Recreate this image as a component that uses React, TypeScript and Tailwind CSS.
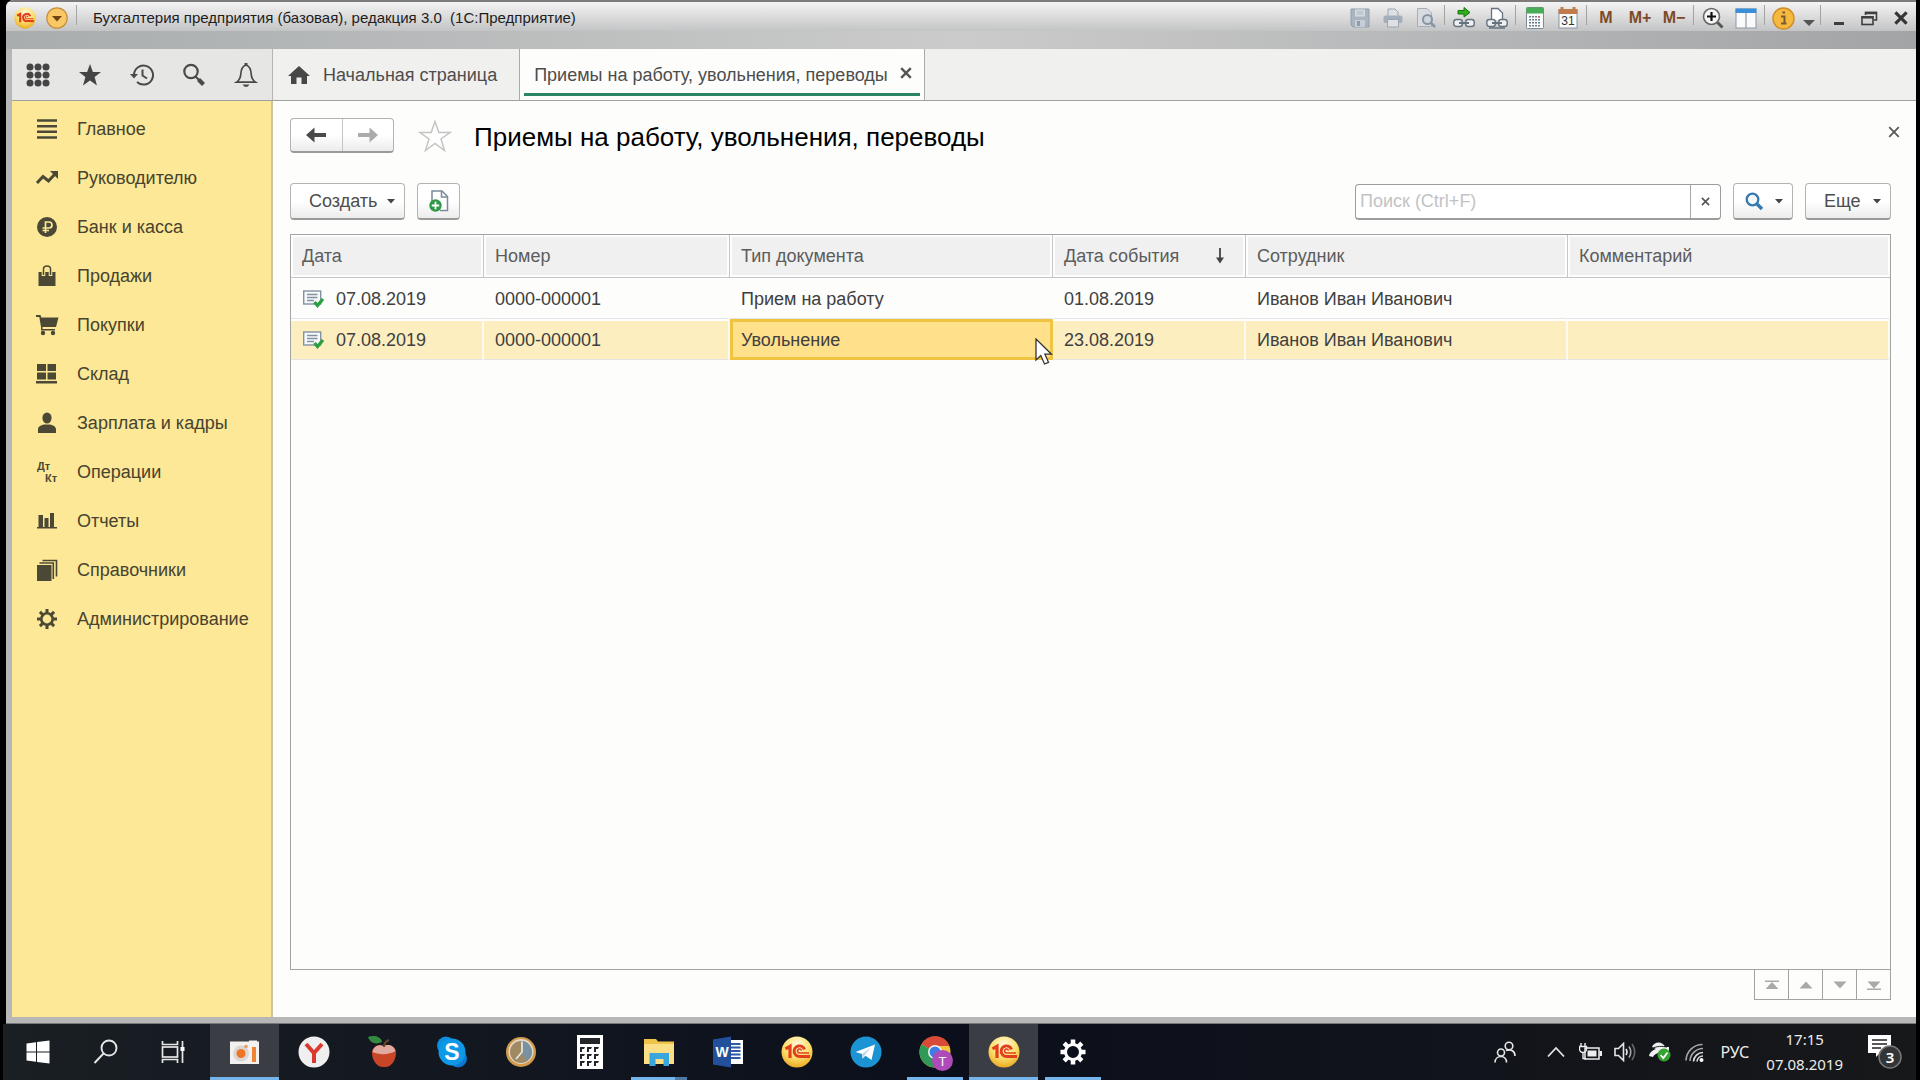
import type { ReactNode } from "react";

const FONT = "font-['Liberation_Sans',Arial,sans-serif]";

function OneCLogo({ size }: { size: number }) {
  return (
    <svg width={size} height={size} viewBox="0 0 32 32" aria-hidden="true">
      <defs>
        <radialGradient id="onec" cx="50%" cy="28%" r="75%">
          <stop offset="0" stopColor="#fffbe2" />
          <stop offset="0.55" stopColor="#fcdf6c" />
          <stop offset="1" stopColor="#e9a51f" />
        </radialGradient>
      </defs>
      <circle cx="16" cy="16" r="15.5" fill="url(#onec)" />
      <path d="M4.500 12.800 L9 10.200 V22" fill="none" stroke="#e2401c" strokeWidth="3.200" />
      <path d="M23.500 13.500 A5.300 5.300 0 1 0 18.500 20.500 H29" fill="none" stroke="#e2401c" strokeWidth="3" />
      <path d="M20.500 14.600 A2 2 0 1 0 18.600 17 H28" fill="none" stroke="#e2401c" strokeWidth="1.500" />
    </svg>
  );
}

function Caret({ className = "" }: { className?: string }) {
  return (
    <svg className={className} width="8" height="5" viewBox="0 0 8 5" aria-hidden="true">
      <path d="M0 0 H8 L4 4.5 Z" fill="#444" />
    </svg>
  );
}

function Cross({ size, width = 2, color = "#555" }: { size: number; width?: number; color?: string }) {
  return (
    <svg width={size} height={size} viewBox="0 0 10 10" aria-hidden="true">
      <path d="M1 1 L9 9 M9 1 L1 9" stroke={color} strokeWidth={width} />
    </svg>
  );
}

/* ---------- title bar ---------- */

function TitleButton({ label, className = "w-[33px]", children }: { label: string; className?: string; children: ReactNode }) {
  return (
    <button type="button" aria-label={label} className={`flex h-8 shrink-0 items-center justify-center ${className}`}>
      {children}
    </button>
  );
}

function TitleSep() {
  return <span className="mx-0.5 h-5 w-px shrink-0 self-start bg-[#a2a2a2]" />;
}

const chain = (
  <g fill="none" stroke="#66727e" strokeWidth="1.4">
    <rect x="0.8" y="12.500" width="8.500" height="7" rx="2.500" fill="#eef1f4" />
    <rect x="12.700" y="12.500" width="8.500" height="7" rx="2.500" fill="#eef1f4" />
    <path d="M6 16 H16" strokeWidth="2" />
  </g>
);

function TitleBar() {
  return (
    <header className="flex h-[49px] flex-col border-t-2 border-[#7d7b7b] bg-[#b3b5b6]">
      <div className="flex h-[29px] items-center bg-gradient-to-b from-[#f4f4f4] via-[#dcdcdc] to-[#c3c4c5] pt-[3px]">
        <TitleButton label="Главное меню" className="ml-[2px] w-[34px]">
          <OneCLogo size={22} />
        </TitleButton>
        <TitleButton label="Сервис" className="w-[30px]">
          <svg width="22" height="22" viewBox="0 0 22 22">
            <circle cx="11" cy="11" r="10.2" fill="#f9c766" stroke="#c98e3c" strokeWidth="1.2" />
            <path d="M6 9 H16 L11 14.5 Z" fill="#6f4414" />
          </svg>
        </TitleButton>
        <span className="mr-4 ml-1 h-5 w-px self-start bg-[#a5a5a5]" />
        <h1 className="flex-1 truncate text-[15px] whitespace-pre text-[#1d1d1d]">
          Бухгалтерия предприятия (базовая), редакция 3.0  (1С:Предприятие)
        </h1>
        <TitleButton label="Сохранить">
          <svg width="20" height="20" viewBox="0 0 20 20">
            <path d="M1 1 H19 V19 H3 L1 17 Z" fill="#a9b4c1" stroke="#929eac" />
            <rect x="5" y="1.5" width="10" height="7" fill="#d5dae0" />
            <path d="M6.500 4 H13.500 M6.500 6 H13.500" stroke="#a9b4c1" />
            <rect x="5" y="12" width="10" height="7" fill="#c6cdd6" />
            <rect x="7" y="13" width="3" height="5" fill="#8e9baa" />
          </svg>
        </TitleButton>
        <TitleButton label="Печать">
          <svg width="20" height="20" viewBox="0 0 20 20">
            <path d="M5 8 V1 H12 L15 4 V8" fill="#dde1e5" stroke="#9aa5b1" />
            <rect x="0.500" y="7.500" width="19" height="7.500" rx="2" fill="#a4afbb" />
            <rect x="4.500" y="11.500" width="11" height="7.500" fill="#dde1e5" stroke="#9aa5b1" />
          </svg>
        </TitleButton>
        <TitleButton label="Предварительный просмотр">
          <svg width="20" height="20" viewBox="0 0 20 20">
            <path d="M1.500 0.500 H11 L15.500 5 V18.500 H1.500 Z" fill="#d8dbdf" stroke="#a4aeb9" />
            <circle cx="11.500" cy="11.500" r="4.500" fill="#cdd5dd" stroke="#8795a3" strokeWidth="2" />
            <path d="M15 15 L19 19" stroke="#8795a3" strokeWidth="2.500" />
          </svg>
        </TitleButton>
        <TitleSep />
        <TitleButton label="Перейти по ссылке">
          <svg width="22" height="22" viewBox="0 0 22 22">
            <path d="M5 3.500 H11 V0.500 L17 5.500 L11 10 V7 H5 Z" fill="#2fae18" stroke="#15790b" />
            {chain}
          </svg>
        </TitleButton>
        <TitleButton label="Получить ссылку">
          <svg width="22" height="22" viewBox="0 0 22 22">
            <path d="M5.500 13 V1.500 H12 L16.500 6 V13" fill="#fff" stroke="#66727e" strokeWidth="1.300" />
            {chain}
            <path d="M3 21 H19" stroke="#66727e" strokeWidth="1.500" />
          </svg>
        </TitleButton>
        <TitleSep />
        <TitleButton label="Калькулятор">
          <svg width="18" height="22" viewBox="0 0 18 22">
            <rect x="0.500" y="0.500" width="17" height="21" rx="1" fill="#fafafa" stroke="#7b8b92" />
            <rect x="0.500" y="0.500" width="17" height="6" fill="#46ad54" />
            <g fill="#6a7c8d">
              {[9, 12, 15, 18].map((y) => [3, 6, 9, 12].map((x) => <rect key={`${x}-${y}`} x={x} y={y} width="2" height="1.500" />))}
            </g>
            <rect x="12" y="9" width="2" height="1.500" fill="#d55" />
          </svg>
        </TitleButton>
        <TitleButton label="Календарь">
          <svg width="20" height="22" viewBox="0 0 20 22">
            <rect x="1" y="3" width="18" height="18" fill="#fbfbfb" stroke="#8696a3" />
            <path d="M0.500 2 H19.500 V7 H0.500 Z" fill="#c07c4c" />
            <path d="M4 0 V4 M16 0 V4" stroke="#c07c4c" strokeWidth="3" />
            <text x="10" y="18" fontSize="12" textAnchor="middle" fill="#333">31</text>
          </svg>
        </TitleButton>
        <TitleSep />
        {["M", "M+", "M−"].map((label) => (
          <button key={label} type="button" className="w-[34px] shrink-0 text-base font-bold text-[#7d4a26]">
            {label}
          </button>
        ))}
        <TitleSep />
        <TitleButton label="Масштаб">
          <svg width="22" height="22" viewBox="0 0 22 22">
            <circle cx="9.500" cy="9.500" r="8" fill="#f5f5f5" stroke="#686868" strokeWidth="1.600" />
            <path d="M9.500 5 V14 M5 9.500 H14" stroke="#111" strokeWidth="2.200" />
            <path d="M15.500 15.500 L20.500 20.500" stroke="#555" strokeWidth="3" />
          </svg>
        </TitleButton>
        <TitleButton label="Разделить окно">
          <svg width="22" height="21" viewBox="0 0 22 21">
            <rect x="1" y="1" width="20" height="19" fill="#fafafa" stroke="#8b98a5" />
            <rect x="0.500" y="0.500" width="21" height="4.500" fill="#3b8fd8" />
            <path d="M11 5 V20" stroke="#7d8791" />
          </svg>
        </TitleButton>
        <TitleSep />
        <TitleButton label="О программе">
          <svg width="23" height="23" viewBox="0 0 23 23">
            <circle cx="11.500" cy="11.500" r="10.500" fill="#f6b940" stroke="#d08c25" strokeWidth="1.400" />
            <path d="M10.500 5.500 H13 M9 9.500 H12.500 V16 M9 16.500 H14.500" fill="none" stroke="#7a5a2c" strokeWidth="2" />
          </svg>
        </TitleButton>
        <TitleButton label="Настройки" className="w-[18px] pt-2.5">
          <svg width="12" height="6" viewBox="0 0 12 6">
            <path d="M0 0 H12 L6 6 Z" fill="#555" />
          </svg>
        </TitleButton>
        <TitleSep />
        <TitleButton label="Свернуть" className="w-[31px] pt-2.5">
          <span className="h-[3px] w-2.5 bg-[#3e3e3e]" />
        </TitleButton>
        <TitleButton label="Восстановить" className="w-[31px]">
          <svg width="17" height="15" viewBox="0 0 17 15" fill="none" stroke="#3e3e3e">
            <path d="M4.500 4 V1.500 H15.500 V9 H13" strokeWidth="1.600" />
            <path d="M4 2 H16" strokeWidth="2.500" />
            <rect x="1" y="6" width="11" height="7.500" strokeWidth="1.600" />
            <path d="M0.500 6.300 H12.500" strokeWidth="2.500" />
          </svg>
        </TitleButton>
        <TitleButton label="Закрыть" className="w-[31px]">
          <Cross size={14} width={2.2} color="#333" />
        </TitleButton>
      </div>
      <div className="flex-1 bg-gradient-to-r from-[#a9adae] via-[#cbcbcb] to-[#a2a4a6]" />
    </header>
  );
}

/* ---------- toolbar and tabs ---------- */

const toolIcons: { label: string; icon: ReactNode }[] = [
  {
    label: "Меню функций",
    icon: (
      <g fill="#454545">
        {[4, 12, 20].map((y) => [4, 12, 20].map((x) => <circle key={`${x}-${y}`} cx={x} cy={y} r="3.500" />))}
      </g>
    ),
  },
  {
    label: "Избранное",
    icon: <path fill="#454545" d="M12 1 L14.900 9 H23 L16.600 14 L19 22.500 L12 17.400 L5 22.500 L7.400 14 L1 9 H9.100 Z" />,
  },
  {
    label: "История",
    icon: (
      <g fill="none" stroke="#4a4a4a" strokeWidth="2">
        <path d="M4 12 A9.500 9.500 0 1 1 7 19" />
        <path d="M12.500 6.500 V12.500 L17 15.500" />
        <path d="M0 11 H8 L4 15.500 Z" fill="#4a4a4a" stroke="none" />
      </g>
    ),
  },
  {
    label: "Поиск",
    icon: (
      <g fill="none" stroke="#4a4a4a">
        <circle cx="9" cy="8.500" r="6.700" strokeWidth="2.200" />
        <path d="M13.500 13.500 L17 17" strokeWidth="2" />
        <path d="M16.500 16.500 L21.500 21.500" strokeWidth="4.200" />
      </g>
    ),
  },
  {
    label: "Уведомления",
    icon: (
      <g fill="none" stroke="#4a4a4a" strokeWidth="1.700">
        <path d="M12 2 C7.500 3.500 7 7 6.800 11 C6.600 15 5 17.500 2.500 19.200 H21.500 C19 17.500 17.400 15 17.200 11 C17 7 16.500 3.500 12 2 Z" />
        <path d="M8.500 21.500 H15.500 L13.500 23.800 H10.500 Z" fill="#4a4a4a" stroke="none" />
        <path d="M12 0 V3" strokeWidth="3" />
      </g>
    ),
  },
];

function TabBar() {
  return (
    <div className="flex h-[52px] border-b border-[#a0a0a0] bg-[#f0f0ef]">
      <div className="flex w-[261px] shrink-0 items-center border-r border-[#b5b5b5] bg-[#e6e6e5]">
        {toolIcons.map(({ label, icon }) => (
          <button key={label} type="button" aria-label={label} className="flex flex-1 justify-center">
            <svg width="24" height="24" viewBox="0 0 24 24">{icon}</svg>
          </button>
        ))}
      </div>
      <a href="#home" className="flex items-center gap-[13px] border-r border-[#ababab] pr-[22px] pl-[15px] text-lg text-[#4d4d4d]">
        <svg width="22" height="20" viewBox="0 0 22 20" aria-hidden="true">
          <path d="M11 1 L22 11 H19 V19 H13.500 V12.500 H8.500 V19 H3 V11 H0 Z" fill="#474747" />
        </svg>
        Начальная страница
      </a>
      <div className="flex flex-col border-r border-[#ababab] bg-[#fdfdfc] px-1">
        <div className="flex flex-1 items-center gap-3 px-2.5 pt-2">
          <a href="#personnel" className="text-lg text-[#4d4d4d]">Приемы на работу, увольнения, переводы</a>
          <button type="button" aria-label="Закрыть вкладку" className="-mr-0.5 pb-1">
            <Cross size={12} width={2} />
          </button>
        </div>
        <span className="mb-1 h-[3px] bg-[#2c8562]" />
      </div>
    </div>
  );
}

/* ---------- sidebar ---------- */

const INK = "#4b4936";

const sections: { label: string; icon: ReactNode }[] = [
  { label: "Главное", icon: <path d="M0 1.500 H20 M0 7.200 H20 M0 12.800 H20 M0 18.500 H20" stroke={INK} strokeWidth="2.500" /> },
  {
    label: "Руководителю",
    icon: (
      <g>
        <path d="M0 15 L6 8.500 L11.500 13 L18 6" fill="none" stroke={INK} strokeWidth="3" />
        <path d="M13 3 H21 V11 Z" fill={INK} />
      </g>
    ),
  },
  {
    label: "Банк и касса",
    icon: (
      <g>
        <circle cx="10" cy="10" r="10" fill={INK} />
        <path d="M8.500 16 V5 H12 A3 3 0 0 1 12 11 H5.500 M5.500 13.500 H12" fill="none" stroke="#fce896" strokeWidth="1.700" />
      </g>
    ),
  },
  {
    label: "Продажи",
    icon: (
      <g>
        <path d="M1.500 6 H18.500 V20 H1.500 Z" fill={INK} />
        <path d="M6.500 10 V3 A3.500 3.500 0 0 1 13.500 3 V10" fill="none" stroke="#fce896" strokeWidth="3.600" />
        <path d="M6.500 9 V3 A3.500 3 0 0 1 13.500 3 V9" fill="none" stroke={INK} strokeWidth="1.500" />
      </g>
    ),
  },
  {
    label: "Покупки",
    icon: (
      <g fill={INK}>
        <path d="M-1 0 H3.500 L4.300 2.500 H21.500 L19 12 H5.500 V14 H18 V15.500 H4 V12 L2.300 2 H-1 Z" />
        <circle cx="6" cy="18" r="2.200" />
        <circle cx="16" cy="18" r="2.200" />
      </g>
    ),
  },
  { label: "Склад", icon: <path d="M0 0 H9 V7 H0 Z M10.500 0 H19 V7 H10.500 Z M0 8.500 H9 V15.500 H0 Z M10.500 8.500 H19 V15.500 H10.500 Z M-1 17 H20 V19.500 H-1 Z" fill={INK} /> },
  {
    label: "Зарплата и кадры",
    icon: (
      <g fill={INK}>
        <ellipse cx="10" cy="5" rx="4.600" ry="5.500" />
        <path d="M1 20 V16 C1.500 13 4 12.500 7 11.500 H13 C16 12.500 18.500 13 19 16 V20 Z" />
      </g>
    ),
  },
  {
    label: "Операции",
    icon: (
      <g fill={INK} fontSize="11" fontWeight="700">
        <text x="0" y="8">Дт</text>
        <text x="8" y="20">Кт</text>
      </g>
    ),
  },
  { label: "Отчеты", icon: <path d="M1.500 4 H6 V16 H7.500 V7 H11.500 V16 H13 V2 H17 V16 H20 V17.500 H0 V16 H1.500 Z" fill={INK} /> },
  {
    label: "Справочники",
    icon: (
      <g>
        <rect x="0" y="5" width="14.500" height="16" fill={INK} />
        <path d="M2.500 3 H16.300 V19 M5.500 0.500 H19.500 V16.500" fill="none" stroke={INK} strokeWidth="1.600" />
      </g>
    ),
  },
  {
    label: "Администрирование",
    icon: (
      <g fill="none" stroke={INK}>
        <circle cx="10" cy="10" r="5.700" strokeWidth="2.600" />
        {[0, 45, 90, 135].map((a) => (
          <path key={a} d="M10 0 V4 M10 16 V20" strokeWidth="3" transform={`rotate(${a} 10 10)`} />
        ))}
      </g>
    ),
  },
];

function Sidebar() {
  return (
    <nav className="w-[261px] shrink-0 border-r-2 border-[#cfc49a] bg-[#fce896] pt-[3px]">
      <ul>
        {sections.map(({ label, icon }) => (
          <li key={label}>
            <a href="#section" className="flex h-[49px] items-center gap-5 pl-[25px] text-lg text-[#47432f]">
              <svg className="shrink-0 overflow-visible" width="20" height="20" viewBox="0 0 20 20" aria-hidden="true">
                {icon}
              </svg>
              {label}
            </a>
          </li>
        ))}
      </ul>
    </nav>
  );
}

/* ---------- document list ---------- */

const raised =
  "flex items-center rounded-[4px] border border-[#b4b4b4] border-b-2 border-b-[#9a9a9a] bg-gradient-to-b from-white from-50% to-[#ececec]";

const columns = ["Дата", "Номер", "Тип документа", "Дата события", "Сотрудник", "Комментарий"];

const rows = [
  { date: "07.08.2019", number: "0000-000001", type: "Прием на работу", eventDate: "01.08.2019", employee: "Иванов Иван Иванович" },
  { date: "07.08.2019", number: "0000-000001", type: "Увольнение", eventDate: "23.08.2019", employee: "Иванов Иван Иванович" },
];

function PostedIcon() {
  return (
    <svg width="21" height="18" viewBox="0 0 21 18" aria-hidden="true">
      <rect x="0.700" y="1" width="17" height="13" fill="#f7f9fb" stroke="#8193a3" strokeWidth="1.400" />
      <path d="M4 4.500 H14.500 M4 7.500 H14.500 M4 10.500 H11" stroke="#8193a3" strokeWidth="1.300" />
      <path d="M11.500 12 L14.500 15.500 L20 9" fill="none" stroke="#2c9f43" strokeWidth="3.300" />
    </svg>
  );
}

function Pointer() {
  return (
    <svg className="absolute top-4 -right-[3px] z-10" width="18" height="28" viewBox="0 0 18 28" aria-hidden="true">
      <path d="M1 1 V22 L5.800 17.500 L9.500 26 L13.500 24.300 L9.900 16.200 H16.500 Z" fill="#fff" stroke="#333" strokeWidth="1.300" />
    </svg>
  );
}

function DocumentTable() {
  return (
    <table className="w-full table-fixed border-separate border-spacing-0 text-left text-lg text-[#404040]">
      <colgroup>
        <col className="w-[193px]" />
        <col className="w-[246px]" />
        <col className="w-[323px]" />
        <col className="w-[193px]" />
        <col className="w-[322px]" />
        <col />
      </colgroup>
      <thead>
        <tr className="h-[43px]">
          {columns.map((name) => (
            <th
              key={name}
              className="border-r border-b border-[#c6c6c6] bg-[#f0f0f0] px-[11px] font-normal text-[#5c5c5c] shadow-[inset_0_0_0_2px_#fdfdfd] last:border-r-0"
            >
              <span className="flex items-center justify-between">
                {name}
                {name === "Дата события" && (
                  <svg className="mr-2" width="12" height="16" viewBox="0 0 12 16" role="img" aria-label="По убыванию">
                    <path d="M6 0 V14" stroke="#444" strokeWidth="1.800" />
                    <path d="M2 9.500 H10 L6 15.500 Z" fill="#444" />
                  </svg>
                )}
              </span>
            </th>
          ))}
        </tr>
      </thead>
      <tbody>
        {rows.map((row) => {
          const selected = row.type === "Увольнение";
          const cell = selected
            ? "border-r-2 border-b border-r-[#fffaf0] border-b-[#e4e4e8] bg-[#fdeec0] px-[11px] pt-0.5 shadow-[inset_0_2px_0_#fff]"
            : "border-r-2 border-b border-r-transparent border-b-[#e4e4e8] px-[11px] pt-0.5";
          return (
            <tr key={row.type} className="h-[41px]">
              <td className={cell}>
                <span className="flex items-center gap-3 pl-px">
                  <PostedIcon />
                  {row.date}
                </span>
              </td>
              <td className={cell}>{row.number}</td>
              <td className={selected ? "relative border-[3px] border-[#efc440] bg-[#ffe18b] px-2" : cell}>
                {row.type}
                {selected && <Pointer />}
              </td>
              <td className={cell}>{row.eventDate}</td>
              <td className={cell}>{row.employee}</td>
              <td className={cell} />
            </tr>
          );
        })}
      </tbody>
    </table>
  );
}

const pagers = [
  { label: "В начало", d: "M0 0.500 H14 V2 H0 Z M7 2 L13.500 9 H0.500 Z" },
  { label: "Вверх", d: "M7 1.500 L13.500 8.500 H0.500 Z" },
  { label: "Вниз", d: "M7 8.500 L0.500 1.500 H13.500 Z" },
  { label: "В конец", d: "M0 8.500 H14 V10 H0 Z M7 8.500 L0.500 1.500 H13.500 Z" },
];

function Page() {
  return (
    <main className="flex min-w-0 flex-1 flex-col bg-[#fdfdfc] pt-[17px] pr-[25px] pb-[17px] pl-[17px]">
      <div className="flex items-center">
        <div className={`${raised} h-[35px] w-[104px]`}>
          <button type="button" aria-label="Назад" className="flex h-full flex-1 items-center justify-center border-r border-[#c4c4c4]">
            <svg width="20" height="16" viewBox="0 0 20 16">
              <path d="M0 8 L8.500 0.500 V6 H20 V10 H8.500 V15.500 Z" fill="#4a4a4a" />
            </svg>
          </button>
          <button type="button" aria-label="Вперед" className="flex h-full flex-1 items-center justify-center">
            <svg width="20" height="16" viewBox="0 0 20 16">
              <path d="M20 8 L11.500 0.500 V6 H0 V10 H11.500 V15.500 Z" fill="#ababab" />
            </svg>
          </button>
        </div>
        <button type="button" aria-label="Добавить в избранное" className="ml-6">
          <svg width="34" height="32" viewBox="0 0 34 32">
            <path d="M17 1.500 L20.800 12.500 H32 L23 19 L26.500 30.500 L17 23.500 L7.500 30.500 L11 19 L2 12.500 H13.200 Z" fill="#fff" stroke="#c4c4c4" strokeWidth="1.500" />
          </svg>
        </button>
        <h2 className="ml-[22px] flex-1 pt-0.5 text-[26px] leading-8 text-black">Приемы на работу, увольнения, переводы</h2>
        <button type="button" aria-label="Закрыть" className="-mr-[17px] self-start p-2">
          <Cross size={12} width={1.4} />
        </button>
      </div>

      <div className="mt-[30px] flex items-center">
        <button type="button" className={`${raised} h-[37px] gap-2.5 pr-[9px] pl-[18px] text-lg text-[#4d4d4d]`}>
          Создать
          <Caret />
        </button>
        <button type="button" aria-label="Создать копированием" className={`${raised} ml-3 h-[37px] w-[43px] justify-center`}>
          <svg width="20" height="22" viewBox="0 0 20 22">
            <path d="M3 14 V1 H13 L18.500 6.500 V20.500 H11" fill="#fff" stroke="#7b8b9b" strokeWidth="1.500" />
            <path d="M12.500 1 V7 H18.500" fill="none" stroke="#7b8b9b" strokeWidth="1.500" />
            <circle cx="6.500" cy="15.500" r="6.200" fill="#2f9a46" />
            <path d="M6.500 11.800 V19.200 M2.800 15.500 H10.200" stroke="#fff" strokeWidth="1.800" />
          </svg>
        </button>
        <div className="ml-auto flex h-9 w-[366px] overflow-hidden rounded-[4px] border border-b-2 border-[#9c9c9c] bg-white">
          <input
            type="text"
            aria-label="Поиск"
            placeholder="Поиск (Ctrl+F)"
            className="min-w-0 flex-1 px-1 text-lg outline-none placeholder:text-[#c3c3c3]"
          />
          <button type="button" aria-label="Очистить" className="flex w-[30px] items-center justify-center border-l border-[#a6a6a6]">
            <Cross size={9} width={1.800} />
          </button>
        </div>
        <button type="button" aria-label="Найти" className={`${raised} ml-3 h-[37px] w-[60px] justify-between pr-[9px] pl-[11px]`}>
          <svg width="19" height="19" viewBox="0 0 19 19">
            <circle cx="7.500" cy="7.500" r="5.800" fill="#f3f9ff" stroke="#3579ae" strokeWidth="2.300" />
            <path d="M11.500 11.500 L17 17" stroke="#3579ae" strokeWidth="3.300" />
          </svg>
          <Caret />
        </button>
        <button type="button" className={`${raised} ml-3 h-[37px] w-[86px] justify-between pr-[9px] pl-[18px] text-lg text-[#4d4d4d]`}>
          Еще
          <Caret />
        </button>
      </div>

      <div className="mt-3.5 flex-1 border border-[#a3a3a3]">
        <DocumentTable />
      </div>
      <div className="-mt-px flex self-end border-l border-[#a3a3a3]">
        {pagers.map(({ label, d }) => (
          <button key={label} type="button" aria-label={label} className="flex h-[31px] w-[34px] items-center justify-center border-y border-r border-[#a3a3a3]">
            <svg width="14" height="10" viewBox="0 0 14 10">
              <path d={d} fill="#a9a9a9" />
            </svg>
          </button>
        ))}
      </div>
    </main>
  );
}

/* ---------- taskbar ---------- */

type Task = { label: string; icon: ReactNode; state?: "running" | "grouped" | "active" };

const tasks: Task[] = [
  {
    label: "Пуск",
    icon: <path d="M4.500 7.500 L14 6.200 V15.400 H4.500 Z M15 6 L27.500 4.500 V15.400 H15 Z M4.500 16.500 H14 V25.800 L4.500 24.500 Z M15 16.500 H27.500 V27.500 L15 26 Z" fill="#fff" />,
  },
  {
    label: "Поиск",
    icon: (
      <g fill="none" stroke="#e6e6e6" strokeWidth="1.900">
        <circle cx="18" cy="12" r="7.500" />
        <path d="M12.500 17.500 L3.500 27" />
      </g>
    ),
  },
  {
    label: "Представление задач",
    icon: (
      <g fill="none" stroke="#e6e6e6" strokeWidth="1.700">
        <path d="M2.500 5 V8.500 H17.500 V5 M2.500 27 V23.500 H17.500 V27" />
        <rect x="2.500" y="11" width="15" height="10" />
        <path d="M22.500 5 V27" />
        <rect x="20.500" y="11" width="4" height="4" fill="#fff" stroke="none" />
      </g>
    ),
  },
  {
    label: "Запись экрана",
    state: "active",
    icon: (
      <g>
        <path d="M1 5.500 H20 V4.500 H28 V5.500 H30 V28 H1 Z" fill="#f3f1ef" />
        <circle cx="12" cy="17.500" r="8" fill="#dad7d4" />
        <circle cx="12" cy="17.500" r="4.500" fill="#ee7526" />
        <circle cx="17" cy="10.500" r="1.800" fill="#ee9960" />
        <rect x="23" y="11" width="4" height="15" fill="#ee8434" />
      </g>
    ),
  },
  {
    label: "Яндекс",
    icon: (
      <g>
        <circle cx="16" cy="16" r="15.500" fill="#efefef" />
        <path d="M8 8 L16 17 L24 8 M16 17 V27" fill="none" stroke="#dc3a2f" strokeWidth="4" />
      </g>
    ),
  },
  {
    label: "Яблоко",
    icon: (
      <g>
        <path d="M16 10 C12 7 5 11 5 17 C5 24 10 32 17 31 C25 32 29 23 29 17 C29 11 22 7 16 10 Z" fill="#c84527" />
        <path d="M16 10 C12 8 6 11 5.500 16 C12 19 22 19 28.500 15 C27 9 21 8 16 10 Z" fill="#e0aaa0" />
        <path d="M1 1 C6 -1 14 0 15 6 C9 9 3 7 1 1 Z" fill="#32893f" />
        <path d="M17 11 C17 7 19 5 22 4" fill="none" stroke="#68412c" strokeWidth="2" />
      </g>
    ),
  },
  {
    label: "Skype",
    icon: (
      <g>
        <circle cx="10" cy="9.500" r="9" fill="#0d8fe0" />
        <circle cx="22" cy="22.500" r="9" fill="#0d78d0" />
        <circle cx="16" cy="16" r="13.500" fill="#0f98e6" />
        <text x="16" y="24" fontSize="23" fontWeight="700" textAnchor="middle" fill="#fff">S</text>
      </g>
    ),
  },
  {
    label: "Часы",
    icon: (
      <g>
        <circle cx="16" cy="16" r="15" fill="#d39a4c" />
        <circle cx="16" cy="15.500" r="12.500" fill="#e2d9c8" />
        <circle cx="16" cy="16" r="11" fill="#a08a64" />
        <path d="M16 16 V5 A11 11 0 0 1 22 25 Z" fill="#7992a2" />
        <path d="M17 5.500 V16 L11 23" fill="none" stroke="#e4e4dd" strokeWidth="1.800" />
      </g>
    ),
  },
  {
    label: "Калькулятор",
    icon: (
      <g>
        <rect x="3" y="-1" width="26" height="34" fill="#fff" />
        <rect x="6" y="2" width="20" height="6" fill="#24272a" />
        {[11, 18, 25].map((y) => [6, 13, 20].map((x) => <path key={`${x}-${y}`} d={`M${x} ${y} h5 l-1 2 h-2 v3 h-2 z`} fill="#24272a" />))}
      </g>
    ),
  },
  {
    label: "Проводник",
    state: "grouped",
    icon: (
      <g>
        <path d="M1 3 H13 L15 5.500 H31 V28 H1 Z" fill="#f0c34b" />
        <path d="M1 8 H31 V28 H1 Z" fill="#fbdf86" />
        <path d="M6.500 30 V17 H26 V30 H20.500 V23 H12.500 V30 Z" fill="#3aa6dd" />
      </g>
    ),
  },
  {
    label: "Word",
    icon: (
      <g>
        <rect x="15" y="4" width="16" height="24" fill="#fff" />
        <path d="M18 8 H28.500 M18 11.500 H28.500 M18 15 H28.500 M18 18.500 H28.500 M18 22 H28.500" stroke="#2c5aa5" strokeWidth="1.800" />
        <path d="M1 3.500 L19 0.500 V31.500 L1 28.500 Z" fill="#23509a" />
        <text x="10" y="21" fontSize="14" fontWeight="700" textAnchor="middle" fill="#fff">W</text>
      </g>
    ),
  },
  { label: "1С:Предприятие", icon: <OneCLogo size={32} /> },
  {
    label: "Telegram",
    icon: (
      <g>
        <circle cx="16" cy="16" r="15.500" fill="#1c93d3" />
        <path d="M5.500 16 L25 8.500 L21.500 24 L15.500 19.800 L12.500 22.500 L12 18 Z" fill="#fff" />
        <path d="M12 18 L21 11.500 L14.500 19.500 L12.500 22.500 Z" fill="#bcd9eb" />
      </g>
    ),
  },
  {
    label: "Chrome",
    state: "running",
    icon: (
      <g>
        <circle cx="16" cy="16" r="15.500" fill="#f4c63c" />
        <path d="M16 16 L2.600 8.200 A15.500 15.500 0 0 1 30.500 10 H16 Z" fill="#d94a38" />
        <path d="M16 16 L2.600 8.200 A15.500 15.500 0 0 0 15 31.500 L21 19 Z" fill="#2f9a57" />
        <circle cx="16" cy="16" r="7" fill="#f4f4f4" />
        <circle cx="16" cy="16" r="5.500" fill="#3f7de3" />
        <circle cx="23.500" cy="24.500" r="10.500" fill="#ad4bb8" />
        <text x="23.500" y="29.500" fontSize="13" textAnchor="middle" fill="#fff">T</text>
      </g>
    ),
  },
  { label: "1С:Предприятие (базовая)", state: "active", icon: <OneCLogo size={32} /> },
  {
    label: "Параметры",
    state: "running",
    icon: (
      <g fill="none" stroke="#fff">
        <circle cx="16" cy="16" r="7.500" strokeWidth="3" />
        {[0, 45, 90, 135].map((a) => (
          <path key={a} d="M16 3.500 V8 M16 24 V28.500" strokeWidth="4.500" transform={`rotate(${a} 16 16)`} />
        ))}
      </g>
    ),
  },
];

function Taskbar() {
  return (
    <footer className="ml-[3px] flex h-14 items-stretch bg-gradient-to-r from-[#1a1f24] via-[#0b0f1b] to-[#17181a] font-['Noto_Sans',sans-serif] text-[#ececec]">
      {tasks.map(({ label, icon, state }) => (
        <button
          key={label}
          type="button"
          aria-label={label}
          className={`flex w-[69px] shrink-0 flex-col items-center justify-between pt-3 ${state === "active" ? "bg-[#3a3d44]" : ""}`}
        >
          <svg className={`overflow-visible ${FONT}`} width="32" height="32" viewBox="0 0 32 32">
            {icon}
          </svg>
          {state === "active" && <span className="h-[3px] w-full bg-[#76b4ec]" />}
          {state === "running" && <span className="h-[3px] w-14 bg-[#76b4ec]" />}
          {state === "grouped" && <span className="h-[3px] w-14 border-r-12 border-[#4e7ba6] bg-[#76b4ec]" />}
        </button>
      ))}
      <div className="ml-auto flex items-center pr-3.5">
        <button type="button" aria-label="Люди" className="mr-[31px]">
          <svg width="22" height="22" viewBox="0 0 22 22" fill="none" stroke="#e6e6e6" strokeWidth="1.600">
            <circle cx="15" cy="5" r="3.800" />
            <circle cx="7" cy="11.500" r="3.500" />
            <path d="M1 21.500 C1 13.500 13 13.500 12.500 21.500 M12 9.500 C17 8 21 10 21 15" />
          </svg>
        </button>
        <button type="button" aria-label="Скрытые значки" className="mr-3.5">
          <svg width="18" height="12" viewBox="0 0 18 12" fill="none" stroke="#e6e6e6" strokeWidth="1.800">
            <path d="M1 10.500 L9 2 L17 10.500" />
          </svg>
        </button>
        <svg className="mr-3" width="23" height="18" viewBox="0 0 23 18" role="img" aria-label="Батарея">
          <rect x="6" y="5" width="14" height="11" fill="none" stroke="#eee" strokeWidth="1.500" />
          <rect x="8.500" y="7.500" width="9" height="6" fill="#eee" />
          <rect x="20.500" y="8" width="2.500" height="5" fill="#eee" />
          <path d="M2 0 V3 M6 0 V3 M0.500 3.500 H7.500 V6 A3.500 3.500 0 0 1 0.500 6 Z M4 9 V15.500 H7" fill="none" stroke="#eee" strokeWidth="1.400" />
        </svg>
        <svg className="mr-3" width="23" height="20" viewBox="0 0 23 20" fill="none" stroke="#e6e6e6" strokeWidth="1.600" role="img" aria-label="Громкость">
          <path d="M1 6.500 H4.500 L9.500 1.500 V18.500 L4.500 13.500 H1 Z" />
          <path d="M12 7 Q14 10 12 13" />
          <path d="M15 4.500 Q18.500 10 15 15.500" stroke="#aaa" />
          <path d="M18 2 Q23.500 10 18 18" stroke="#666" />
        </svg>
        <svg className="mr-3.5" width="22" height="20" viewBox="0 0 22 20" role="img" aria-label="Облако">
          <path d="M3 5 C5 -1 14 -1 16 5 L9 8 Z" fill="#eee" />
          <path d="M0 14 C1 8 9 4.500 20 5 L20 10 C12 9 6 11 4 15 Z" fill="#f2f2f2" />
          <path d="M3 6.500 C8 4 13 4 18 5" fill="none" stroke="#222" />
          <circle cx="15" cy="13" r="6.500" fill="#35a32f" />
          <path d="M11.500 13 L14.300 16 L18.500 10.500" fill="none" stroke="#fff" strokeWidth="1.800" />
        </svg>
        <svg className="mr-4" width="19" height="19" viewBox="0 0 19 19" fill="none" strokeWidth="1.600" role="img" aria-label="Сеть">
          <path d="M1 17.500 A16.500 16.500 0 0 1 17.500 1.500 M5 18 A13 13 0 0 1 18 5.500" stroke="#a5a5a5" />
          <path d="M8.500 18.500 A9.500 9.500 0 0 1 18 9.500 M12 18.500 A6 6 0 0 1 18 13" stroke="#ddd" />
          <circle cx="16.500" cy="17" r="2" fill="#fff" />
        </svg>
        <span className="mr-[17px] text-base">РУС</span>
        <time className="mr-[25px] text-center text-[15px] leading-[25px]">
          17:15
          <br />
          07.08.2019
        </time>
        <button type="button" aria-label="Уведомления">
          <svg width="34" height="36" viewBox="0 0 34 36">
            <path d="M0 1 H23 V19 H12 L8 23 V19 H0 Z" fill="#fff" />
            <path d="M4 6 H19 M4 10 H19 M4 14 H13" stroke="#222" strokeWidth="1.500" />
            <circle cx="22" cy="23" r="11" fill="#333436" stroke="#77787a" strokeWidth="1.500" />
            <text x="22" y="28.500" fontSize="15" fontWeight="600" textAnchor="middle" fill="#fff">3</text>
          </svg>
        </button>
      </div>
    </footer>
  );
}

export default function App() {
  return (
    <div className={`flex min-h-screen flex-col bg-black pr-1 ${FONT}`}>
      <div className="ml-1.5 flex flex-1 flex-col overflow-hidden rounded-tl-lg border-b border-[#77777a] bg-[#b7b7b7]">
        <TitleBar />
        <div className="ml-1.5 flex flex-1 flex-col pb-1.5">
          <TabBar />
          <div className="flex flex-1">
            <Sidebar />
            <Page />
          </div>
        </div>
      </div>
      <Taskbar />
    </div>
  );
}
